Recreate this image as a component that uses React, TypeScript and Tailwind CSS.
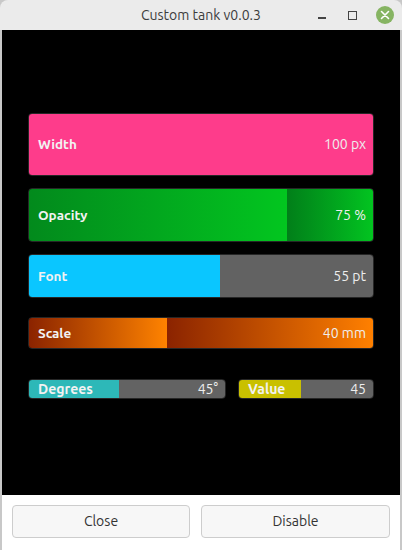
import React from 'react'

const font = { fontFamily: 'Ubuntu, "Noto Sans", "Open Sans", sans-serif' }

function Bar({ label, value, pct, fill, rest, h, small }: {
  label: string; value: string; pct: number; fill: string; rest: string; h: string; small?: boolean
}) {
  return (
    <div className={`relative flex w-full overflow-hidden rounded-[4px] border border-[#ffffff26] ${h}`}>
      <div className={fill} style={{ width: `${pct}%` }} />
      <div className={`flex-1 ${rest}`} />
      <div className="absolute inset-0 flex items-center justify-between pl-[9px] pr-[7px]">
        <span className={`${small ? 'text-[14px]' : 'text-[13.5px]'} font-bold text-[#f2f2f2]`}>{label}</span>
        <span className="text-[14px] text-[#eeeeee]">{value}</span>
      </div>
    </div>
  )
}

export default function App() {
  return (
    <div className="flex h-[550px] w-[402px] flex-col bg-[#c8c8c8]" style={font}>
      <div className="relative flex h-[30px] shrink-0 items-center justify-center rounded-t-[8px] bg-[#ebebeb]">
        <span className="text-[14px] text-[#3c3c3c]">Custom tank v0.0.3</span>
        <div className="absolute right-[8px] top-0 flex h-[30px] items-center">
          <div className="mr-[22px] mt-[6px] h-[1.5px] w-[8px] bg-[#444]" />
          <div className="mr-[19px] h-[9px] w-[9px] border border-[#444]" />
          <div className="flex h-[18px] w-[18px] items-center justify-center rounded-full bg-[#86b462]">
            <svg width="10" height="10" viewBox="0 0 10 10">
              <path d="M1.5 1.5 L8.5 8.5 M8.5 1.5 L1.5 8.5" stroke="#fff" strokeWidth="1.6" strokeLinecap="round" />
            </svg>
          </div>
        </div>
      </div>
      <div className="mx-[2px] flex flex-1 flex-col bg-black px-[26px] pt-[83px]">
        <Bar label="Width" value="100 px" pct={100} h="h-[63px]"
          fill="bg-[#fe3c8b]" rest="bg-[#fe3c8b]" />
        <div className="mt-[12px]">
          <Bar label="Opacity" value="75 %" pct={75} h="h-[54px]"
            fill="bg-gradient-to-r from-[#028a1c] to-[#02c61f]" rest="bg-gradient-to-r from-[#017f19] to-[#02c420]" />
        </div>
        <div className="mt-[12px]">
          <Bar label="Font" value="55 pt" pct={55.5} h="h-[44px]"
            fill="bg-[#0ac6ff]" rest="bg-[#626262]" />
        </div>
        <div className="mt-[19px]">
          <Bar label="Scale" value="40 mm" pct={40} h="h-[32px]"
            fill="bg-gradient-to-r from-[#8b2300] to-[#ff8300]" rest="bg-gradient-to-r from-[#8b2300] to-[#ff8000]" />
        </div>
        <div className="mt-[30px] flex gap-[12px]">
          <div className="w-[198px]">
            <Bar label="Degrees" value="45°" pct={46} h="h-[20px]" small
              fill="bg-[#2db8b8]" rest="bg-[#636363]" />
          </div>
          <div className="flex-1">
            <Bar label="Value" value="45" pct={46} h="h-[20px]" small
              fill="bg-[#c9c000]" rest="bg-[#636363]" />
          </div>
        </div>
      </div>
      <div className="mx-[2px] flex h-[55px] shrink-0 gap-[11px] bg-white px-[10px] pt-[10px]">
        <button className="h-[33px] w-[178px] rounded-[4px] border border-[#cdcdcd] bg-[#f7f7f7] text-[14px] text-[#333]">Close</button>
        <button className="h-[33px] flex-1 rounded-[4px] border border-[#cdcdcd] bg-[#f7f7f7] text-[14px] text-[#333]">Disable</button>
      </div>
    </div>
  )
}
